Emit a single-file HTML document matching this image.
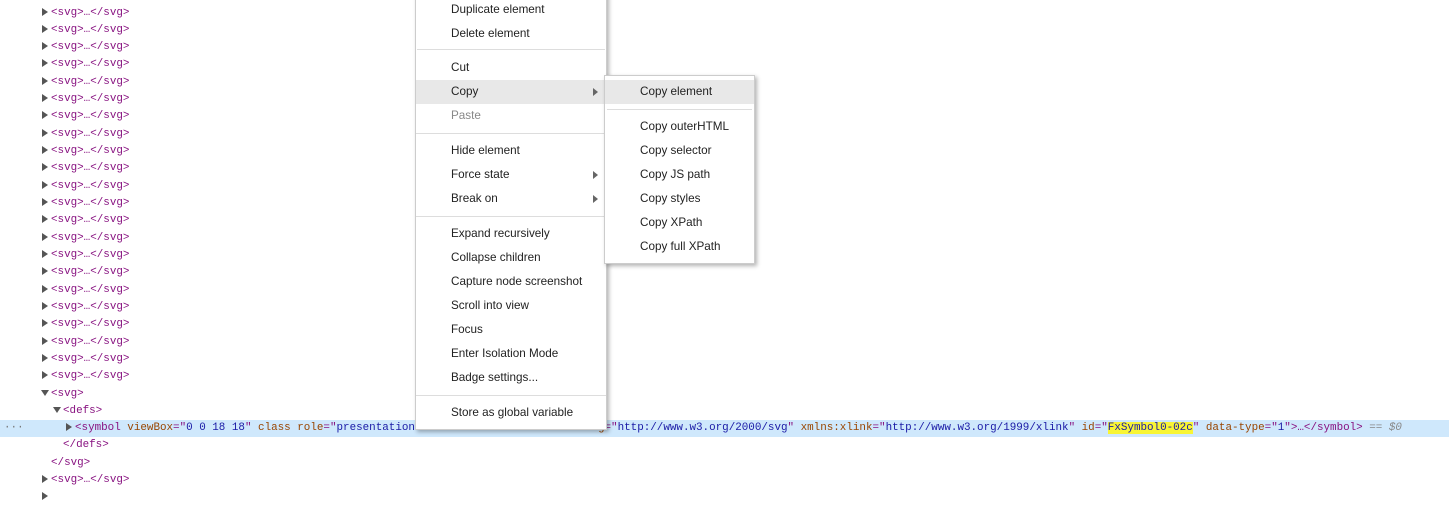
<!DOCTYPE html><html><head><style>
body{margin:0;width:1449px;height:494px;overflow:hidden;background:#fff;position:relative;font-family:"Liberation Mono",monospace;font-size:10.9px}
.r{position:absolute;left:0;height:17px;line-height:17px;white-space:pre;color:#881280}
.t{position:absolute;width:0;height:0;border-top:4px solid transparent;border-bottom:4px solid transparent;border-left:6px solid #555;top:3px}
.d{position:absolute;width:0;height:0;border-left:4px solid transparent;border-right:4px solid transparent;border-top:6px solid #555;top:4px}
.an{color:#994500}.av{color:#1a1aa6}
.m{position:absolute;background:#fff;border:1px solid #ccc;box-shadow:2px 2px 4px rgba(0,0,0,.3);font-family:"Liberation Sans",sans-serif;font-size:11.7px;color:#222}
.i{position:absolute;left:0;right:0;height:24px;line-height:24px}
.s{position:absolute;left:0;right:0;height:1px;background:#ddd}
.h{background:#e8e8e8}
.ar{position:absolute;right:8px;top:8px;width:0;height:0;border-top:4px solid transparent;border-bottom:4px solid transparent;border-left:5px solid #666}
</style></head><body>
<div id="rows"></div>
<script>
var h='';
for(var k=0;k<22;k++){var y=4.5+k*17.33;h+='<div class="r" style="top:'+y+'px"><span class="t" style="left:42px"></span><span style="position:absolute;left:51px">&lt;svg&gt;…&lt;/svg&gt;</span></div>';}
h+='<div class="r" style="top:-13px"><span class="t" style="left:42px"></span><span style="position:absolute;left:51px">&lt;svg&gt;…&lt;/svg&gt;</span></div>';
h+='<div class="r" style="top:385.5px"><span class="d" style="left:41px"></span><span style="position:absolute;left:51px">&lt;svg&gt;</span></div>';
h+='<div class="r" style="top:402.5px"><span class="d" style="left:53px"></span><span style="position:absolute;left:63px">&lt;defs&gt;</span></div>';
h+='<div class="r" style="top:419.5px;width:1449px;background:#cfe8fc"><span style="position:absolute;left:4px;color:#777">···</span><span class="t" style="left:66px"></span><span style="position:absolute;left:75px">&lt;symbol <span class="an">viewBox</span>="<span class="av">0 0 18 18</span>" <span class="an">class</span> <span class="an">role</span>="<span class="av">presentation</span>" <span class="an">focusable</span>="<span class="av">false</span>" <span class="an">xmlns:svg</span>="<span class="av">http://www.w3.org/2000/svg</span>" <span class="an">xmlns:xlink</span>="<span class="av">http://www.w3.org/1999/xlink</span>" <span class="an">id</span>="<span class="av" style="background:#f8f535">FxSymbol0-02c</span>" <span class="an">data-type</span>="<span class="av">1</span>"&gt;…&lt;/symbol&gt; <span style="color:#888;font-style:italic">== $0</span></span></div>';
h+='<div class="r" style="top:437px"><span style="position:absolute;left:63px">&lt;/defs&gt;</span></div>';
h+='<div class="r" style="top:454.5px"><span style="position:absolute;left:51px">&lt;/svg&gt;</span></div>';
h+='<div class="r" style="top:471.5px"><span class="t" style="left:42px"></span><span style="position:absolute;left:51px">&lt;svg&gt;…&lt;/svg&gt;</span></div>';
h+='<div class="r" style="top:489px"><span class="t" style="left:42px"></span></div>';
document.getElementById('rows').innerHTML=h;
</script>
<div class="m" style="left:415px;top:-10px;width:190px;height:438px">
<div class="i" style="top:7px;padding-left:35px">Duplicate element</div>
<div class="i" style="top:31px;padding-left:35px">Delete element</div>
<div class="s" style="top:58px;left:1px;right:1px"></div>
<div class="i" style="top:65px;padding-left:35px">Cut</div>
<div class="i h" style="top:89px;padding-left:35px">Copy<span class="ar"></span></div>
<div class="i" style="top:113px;padding-left:35px;color:#888">Paste</div>
<div class="s" style="top:142px"></div>
<div class="i" style="top:148px;padding-left:35px">Hide element</div>
<div class="i" style="top:172px;padding-left:35px">Force state<span class="ar"></span></div>
<div class="i" style="top:196px;padding-left:35px">Break on<span class="ar"></span></div>
<div class="s" style="top:225px"></div>
<div class="i" style="top:231px;padding-left:35px">Expand recursively</div>
<div class="i" style="top:255px;padding-left:35px">Collapse children</div>
<div class="i" style="top:279px;padding-left:35px">Capture node screenshot</div>
<div class="i" style="top:303px;padding-left:35px">Scroll into view</div>
<div class="i" style="top:327px;padding-left:35px">Focus</div>
<div class="i" style="top:351px;padding-left:35px">Enter Isolation Mode</div>
<div class="i" style="top:375px;padding-left:35px">Badge settings...</div>
<div class="s" style="top:404px"></div>
<div class="i" style="top:410px;padding-left:35px">Store as global variable</div>
</div>
<div class="m" style="left:604px;top:75px;width:149px;height:187px">
<div class="i h" style="top:4px;padding-left:35px">Copy element</div>
<div class="s" style="top:33px;left:2px;right:2px"></div>
<div class="i" style="top:39px;padding-left:35px">Copy outerHTML</div>
<div class="i" style="top:63px;padding-left:35px">Copy selector</div>
<div class="i" style="top:87px;padding-left:35px">Copy JS path</div>
<div class="i" style="top:111px;padding-left:35px">Copy styles</div>
<div class="i" style="top:135px;padding-left:35px">Copy XPath</div>
<div class="i" style="top:159px;padding-left:35px">Copy full XPath</div>
</div>
</body></html>
